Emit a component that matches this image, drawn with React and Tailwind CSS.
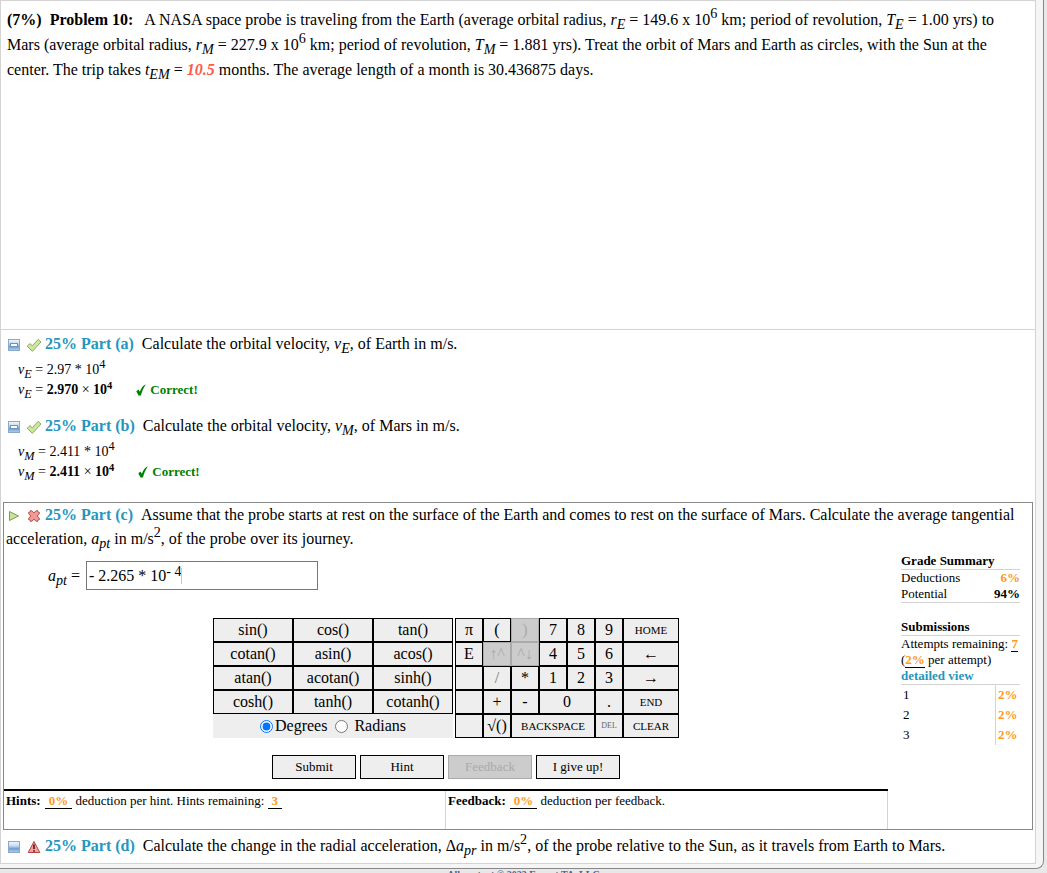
import React, { useState } from 'react';

const functionKeys = [
    'sin()', 'cos()', 'tan()',
    'cotan()', 'asin()', 'acos()',
    'atan()', 'acotan()', 'sinh()',
    'cosh()', 'tanh()', 'cotanh()',
];

const padKeys = [
    { label: 'π' }, { label: '(' }, { label: ')', disabled: true },
    { label: '7' }, { label: '8' }, { label: '9' }, { label: 'HOME', size: 'text-[11px]' },
    { label: 'E' }, { label: '↑^', disabled: true }, { label: '^↓', disabled: true },
    { label: '4' }, { label: '5' }, { label: '6' }, { label: '←' },
    { label: '' }, { label: '/', tone: 'text-[#777]' }, { label: '*' },
    { label: '1' }, { label: '2' }, { label: '3' }, { label: '→' },
    { label: '' }, { label: '+' }, { label: '-' },
    { label: '0', span: 'col-span-2' }, { label: '.' }, { label: 'END', size: 'text-[11px]' },
    { label: '' }, { label: '√()' }, { label: 'BACKSPACE', size: 'text-[11px]', span: 'col-span-3' },
    { label: 'DEL', size: 'text-[8px]', tone: 'text-[#666]' }, { label: 'CLEAR', size: 'text-[11px]' },
];

const CollapseIcon = ({ plain }) => (
    <svg className="w-3 h-3 block" viewBox="0 0 12 12">
        <defs>
            <linearGradient id="collapseFill" x1="0" y1="0" x2="0" y2="1">
                <stop offset="0" stopColor="#f4f9fd" />
                <stop offset="0.4" stopColor="#c3daf0" />
                <stop offset="0.65" stopColor="#6f9fd0" />
                <stop offset="1" stopColor="#b4d2ee" />
            </linearGradient>
        </defs>
        <rect x="0.5" y="0.5" width="11" height="11" fill="url(#collapseFill)" stroke="#8ba9c6" />
        {!plain && <rect x="2.5" y="4.5" width="7" height="3" fill="#fff" stroke="#6b93c0" />}
    </svg>
);

const ArrowIcon = () => (
    <svg className="w-3 h-3 block" viewBox="0 0 12 12">
        <path d="M1.5 1.5 L10.5 6 L1.5 10.5 Z" fill="#c5e39a" stroke="#7da04e" strokeLinejoin="round" />
    </svg>
);

const CheckIcon = () => (
    <svg className="w-4 h-4 block" viewBox="0 0 16 16">
        <path d="M1.2 9.2 L4 6.6 L6.3 8.8 L12.2 2.3 L15 5 L6.4 14.4 Z" fill="#cbe798" stroke="#93a873" strokeLinejoin="round" />
    </svg>
);

const CrossIcon = () => (
    <svg className="w-4 h-4 block" viewBox="0 0 16 16">
        <path
            d="M4.5 2.5 L6.2 3 L8 5 L9.8 3 L11.5 2.5 L12 4 L13.5 4.5 L13 6.2 L11 8 L13 9.8 L13.5 11.5 L12 12 L11.5 13.5 L9.8 13 L8 11 L6.2 13 L4.5 13.5 L4 12 L2.5 11.5 L3 9.8 L5 8 L3 6.2 L2.5 4.5 L4 4 Z"
            fill="#f09a95"
            stroke="#c0504d"
            strokeLinejoin="round"
        />
    </svg>
);

const WarningIcon = () => (
    <svg className="w-4 h-4 block" viewBox="0 0 16 16">
        <path d="M8 2.5 L13.8 13.5 H2.2 Z" fill="#f2a09c" stroke="#b94441" strokeLinejoin="round" />
        <path d="M8 5.5 V10 M8 11.2 V12.7" stroke="#5a1010" strokeWidth="1.6" />
    </svg>
);

const Sub = ({ children }) => (
    <sub className="text-[88%] italic bottom-[-4px]">{children}</sub>
);

const Sup = ({ children }) => <sup className="text-[88%]">{children}</sup>;

const PartLabel = ({ letter, toggle, status }) => (
    <>
        <span className="inline-flex items-center gap-1.5 align-middle mr-[3px]">
            <button type="button" aria-label={`Toggle part ${letter}`}>{toggle}</button>
            {status}
        </span>
        <strong className="text-[#2596be] mr-2">25% Part ({letter})</strong>
    </>
);

const AnsweredPart = ({ letter, body, planet, entered, result }) => (
    <section className="pb-3.5">
        <p className="pl-[7px] leading-6">
            <PartLabel letter={letter} toggle={<CollapseIcon />} status={<CheckIcon />} />
            Calculate the orbital velocity, <i>v</i><Sub>{planet}</Sub>, of {body} in m/s.
        </p>
        <div className="mt-1 pl-[17px] text-sm leading-5">
            <p><i>v</i><Sub>{planet}</Sub> = {entered} * 10<Sup>4</Sup></p>
            <p className="flex items-center gap-6">
                <span>
                    <i>v</i><Sub>{planet}</Sub> = <b>{result}</b> × <b>10<sup>4</sup></b>
                </span>
                <strong className="flex items-center gap-1 text-[13px] text-[#008000]">
                    <svg className="w-2.5 h-3" viewBox="0 0 10 12">
                        <path d="M0.3 7.2 L2.6 5.6 L3.8 7.8 C5 4.6 6.8 1.8 9.8 0.3 C7.6 3.8 6 7.4 4.9 11.4 H2.5 Z" fill="#008000" />
                    </svg>
                    Correct!
                </strong>
            </p>
        </div>
    </section>
);

const Key = ({ label, disabled, size = 'text-base', tone = 'text-black', span = '' }) => (
    <button
        type="button"
        disabled={disabled}
        aria-label={label || 'blank'}
        className={`h-6 border leading-5 ${size} ${span} ${
            disabled ? 'bg-[#ccc] border-[#aaa] text-[#aaa]' : `bg-[#eee] border-black ${tone}`
        }`}
    >
        {label}
    </button>
);

const Action = ({ children, disabled }) => (
    <button
        type="button"
        disabled={disabled}
        className={`w-[84px] h-6 border text-[13px] ${
            disabled ? 'bg-[#ccc] border-[#aaa] text-[#aaa]' : 'bg-[#eee] border-black'
        }`}
    >
        {children}
    </button>
);

const Blank = ({ children }) => (
    <b className="border-b border-black text-[#ff9922]">{children}</b>
);

const GradeSummary = () => (
    <aside className="pl-[13px] pr-3 -mt-2 text-[13px] leading-4">
        <h3 className="font-bold border-b border-[#d3d3d3]">Grade Summary</h3>
        <dl className="grid grid-cols-[1fr_auto] border-b border-[#d3d3d3]">
            <dt>Deductions</dt>
            <dd className="text-right font-bold text-[#ff9922]">6%</dd>
            <dt>Potential</dt>
            <dd className="text-right font-bold">94%</dd>
        </dl>
        <h3 className="mt-4 font-bold border-b border-[#d3d3d3]">Submissions</h3>
        <p className="whitespace-nowrap">Attempts remaining: <Blank>7</Blank></p>
        <p>(<Blank>2%</Blank> per attempt)</p>
        <a href="#detailed" className="block font-bold text-[#2596be]">detailed view</a>
        <table className="w-full border-t border-[#d3d3d3]">
            <tbody>
                {[1, 2, 3].map((n) => (
                    <tr key={n} className="h-5">
                        <td className="pl-0.5">{n}</td>
                        <td className="w-[25px] border-l border-[#d3d3d3] text-center font-bold text-[#ff9922]">2%</td>
                    </tr>
                ))}
            </tbody>
        </table>
    </aside>
);

const App = () => {
    const [mantissa, setMantissa] = useState('- 2.265 * 10');
    const [exponent, setExponent] = useState('- 4');
    const [unit, setUnit] = useState('degrees');

    return (
        <div className="h-screen overflow-hidden bg-[#e8e8e8] font-['Liberation_Serif',serif] text-base text-black">
            <div className="mr-[3px] pr-[7px] pb-1 bg-[#f5f5f5] border-r border-b border-[#888] rounded-br-lg">
                <main className="bg-white border border-[#d3d3d3]">
                    <section className="min-h-[328px] pt-1.5 pl-1.5 pr-8 leading-[25px]">
                        <p>
                            <strong className="mr-2">(7%)</strong>
                            <strong className="mr-[11px]">Problem 10:</strong>
                            A NASA space probe is traveling from the Earth (average orbital radius, <i>r</i><Sub>E</Sub> = 149.6
                            x 10<Sup>6</Sup> km; period of revolution, <i>T</i><Sub>E</Sub> = 1.00 yrs) to Mars (average orbital
                            radius, <i>r</i><Sub>M</Sub> = 227.9 x 10<Sup>6</Sup> km; period of
                            revolution, <i>T</i><Sub>M</Sub> = 1.881 yrs). Treat the orbit of Mars and Earth as circles, with the
                            Sun at the center. The trip takes <i>t</i><Sub>EM</Sub> = <b className="italic text-[#ff5a45]">10.5</b> months.
                            The average length of a month is 30.436875 days.
                        </p>
                    </section>

                    <div className="border-t border-[#d3d3d3] pt-0.5">
                        <AnsweredPart letter="a" body="Earth" planet="E" entered="2.97" result="2.970" />
                        <AnsweredPart letter="b" body="Mars" planet="M" entered="2.411" result="2.411" />
                    </div>

                    <section className="mt-1.5 mx-0.5 border border-[#888]">
                        <p className="pl-0.5 pr-2 leading-6">
                            <span className="pl-0.5">
                                <PartLabel letter="c" toggle={<ArrowIcon />} status={<CrossIcon />} />
                            </span>
                            Assume that the probe starts at rest on the surface of the Earth and comes to rest on the surface of
                            Mars. Calculate the average tangential acceleration, <i>a</i><Sub>pt</Sub> in m/s<Sup>2</Sup>, of the
                            probe over its journey.
                        </p>

                        <div className="mt-2.5 grid grid-cols-[minmax(0,1fr)_144px]">
                            <div className="flex flex-col items-center">
                                <div className="self-stretch flex items-center gap-1.5 pl-11">
                                    <label htmlFor="answer"><i>a</i><Sub>pt</Sub> =</label>
                                    <div className="flex items-center w-[232px] h-[29px] pl-0.5 border border-[#777]">
                                        <input
                                            id="answer"
                                            value={mantissa}
                                            onChange={(e) => setMantissa(e.target.value)}
                                            className="field-sizing-content outline-none"
                                        />
                                        <input
                                            aria-label="Exponent"
                                            value={exponent}
                                            onChange={(e) => setExponent(e.target.value)}
                                            className="field-sizing-content mb-2 text-sm leading-4 outline-none"
                                        />
                                        <span className="w-px h-4 bg-[#ffb98a]"></span>
                                    </div>
                                </div>

                                {/* Keypad */}
                                <div className="mt-7 flex gap-0.5">
                                    <div className="w-[240px] bg-[#eee]">
                                        <div className="grid grid-cols-3">
                                            {functionKeys.map((key) => <Key key={key} label={key} />)}
                                        </div>
                                        <div className="h-6 flex items-center justify-center gap-2 leading-6">
                                            <label className="flex items-center gap-0.5">
                                                <input
                                                    type="radio"
                                                    name="unit"
                                                    checked={unit === 'degrees'}
                                                    onChange={() => setUnit('degrees')}
                                                />
                                                Degrees
                                            </label>
                                            <label className="flex items-center gap-1.5">
                                                <input
                                                    type="radio"
                                                    name="unit"
                                                    checked={unit === 'radians'}
                                                    onChange={() => setUnit('radians')}
                                                />
                                                Radians
                                            </label>
                                        </div>
                                    </div>
                                    <div className="grid grid-cols-[repeat(6,28px)_56px]">
                                        {padKeys.map((key, i) => <Key key={i} {...key} />)}
                                    </div>
                                </div>

                                <div className="mt-[17px] mb-2.5 flex gap-1">
                                    <Action>Submit</Action>
                                    <Action>Hint</Action>
                                    <Action disabled>Feedback</Action>
                                    <Action>I give up!</Action>
                                </div>

                                <div className="self-stretch grid grid-cols-2 h-10 border-t-2 border-black text-[13px] leading-5">
                                    <p className="pl-0.5 border-r border-[#d3d3d3]">
                                        <b className="mr-1">Hints:</b>
                                        <Blank><span className="px-1">0%</span></Blank> deduction per hint. Hints
                                        remaining: <Blank><span className="px-1">3</span></Blank>
                                    </p>
                                    <p className="pl-0.5 border-r border-[#d3d3d3]">
                                        <b className="mr-1">Feedback:</b>
                                        <Blank><span className="px-1">0%</span></Blank> deduction per feedback.
                                    </p>
                                </div>
                            </div>

                            <GradeSummary />
                        </div>
                    </section>

                    <p className="pt-1 pb-[5px] pl-[7px] leading-6">
                        <PartLabel letter="d" toggle={<CollapseIcon plain />} status={<WarningIcon />} />
                        Calculate the change in the radial acceleration, Δ<i>a</i><Sub>pr</Sub> in m/s<Sup>2</Sup>, of the probe
                        relative to the Sun, as it travels from Earth to Mars.
                    </p>
                </main>
            </div>
            <footer className="text-center text-[10px] leading-3 font-bold text-[#4a5f94]">
                All content © 2023 Expert TA, LLC
            </footer>
        </div>
    );
};

export default App;
